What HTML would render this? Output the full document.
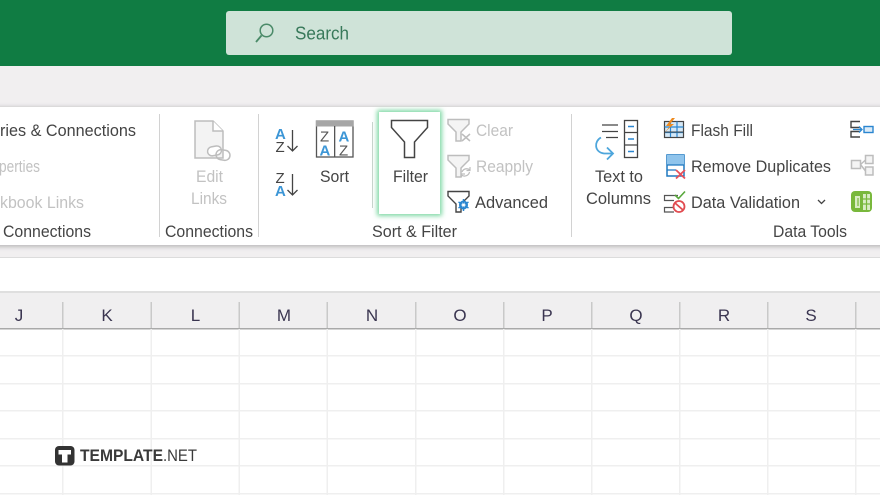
<!DOCTYPE html>
<html><head><meta charset="utf-8">
<style>
html,body{margin:0;padding:0;width:880px;height:495px;overflow:hidden;background:#fff}
svg{display:block;filter:blur(.35px)}
text{font-family:"Liberation Sans",sans-serif;font-size:17px;fill:#444}
.d{fill:#c2c2c2}
.h{font-size:17px;fill:#3a3550}
</style></head><body>
<svg width="880" height="495" viewBox="0 0 880 495" xmlns="http://www.w3.org/2000/svg">
<defs>
<filter id="glow" x="-30%" y="-30%" width="160%" height="160%"><feGaussianBlur stdDeviation="2.5"/></filter>
<filter id="sh" x="-5%" y="-20%" width="110%" height="150%"><feGaussianBlur stdDeviation="2"/></filter>
</defs>
<!-- bands -->
<rect width="880" height="66" fill="#107c43"/>
<rect y="66" width="880" height="191" fill="#f1eff0"/>
<rect x="226" y="11" width="506" height="44" rx="3" fill="#cfe3d8"/>
<circle cx="266.500" cy="30.500" r="6.300" fill="none" stroke="#4a8a68" stroke-width="1.500"/>
<path d="M261.500 35.500L256 42" stroke="#4a8a68" stroke-width="1.800" fill="none"/>
<text x="295" y="39.500" textLength="54" lengthAdjust="spacingAndGlyphs" style="fill:#38795a;font-size:18px">Search</text>
<!-- ribbon -->
<rect x="-10" y="107" width="900" height="140" fill="#8f8f8f" opacity=".55" filter="url(#sh)"/>
<rect y="107" width="880" height="138" fill="#fff"/>
<rect y="257" width="880" height="1" fill="#dcdcdc"/>
<rect y="258" width="880" height="33" fill="#fff"/>
<rect y="291" width="880" height="2" fill="#dfdfdf"/>
<rect y="293" width="880" height="35" fill="#f0eff0"/>
<rect y="328" width="880" height="1.500" fill="#a9a9a9"/>
<!-- ribbon separators -->
<rect x="159" y="114" width="1" height="123" fill="#d2d2d2"/>
<rect x="258" y="114" width="1" height="123" fill="#d2d2d2"/>
<rect x="372" y="122" width="1" height="86" fill="#c9d4cd"/>
<rect x="571" y="114" width="1" height="123" fill="#d2d2d2"/>
<!-- grid -->
<g fill="#efefef">
<rect y="355" width="880" height="1.500"/><rect y="383" width="880" height="1.500"/><rect y="410" width="880" height="1.500"/><rect y="438" width="880" height="1.500"/><rect y="465" width="880" height="1.500"/><rect y="493" width="880" height="1.500"/>
<rect x="62" y="329" width="1.500" height="166"/><rect x="150.500" y="329" width="1.500" height="166"/><rect x="238.500" y="329" width="1.500" height="166"/><rect x="326.500" y="329" width="1.500" height="166"/><rect x="415" y="329" width="1.500" height="166"/><rect x="503" y="329" width="1.500" height="166"/><rect x="591" y="329" width="1.500" height="166"/><rect x="679" y="329" width="1.500" height="166"/><rect x="767" y="329" width="1.500" height="166"/><rect x="855" y="329" width="1.500" height="166"/>
</g>
<g fill="#c9c9c9">
<rect x="62" y="302" width="1.500" height="26"/><rect x="150.500" y="302" width="1.500" height="26"/><rect x="238.500" y="302" width="1.500" height="26"/><rect x="326.500" y="302" width="1.500" height="26"/><rect x="415" y="302" width="1.500" height="26"/><rect x="503" y="302" width="1.500" height="26"/><rect x="591" y="302" width="1.500" height="26"/><rect x="679" y="302" width="1.500" height="26"/><rect x="767" y="302" width="1.500" height="26"/><rect x="855" y="302" width="1.500" height="26"/>
</g>
<!-- column letters -->
<g text-anchor="middle">
<text class="h" x="19" y="321">J</text><text class="h" x="107" y="321">K</text><text class="h" x="195.500" y="321">L</text><text class="h" x="284" y="321">M</text><text class="h" x="372" y="321">N</text><text class="h" x="460" y="321">O</text><text class="h" x="547" y="321">P</text><text class="h" x="636" y="321">Q</text><text class="h" x="724" y="321">R</text><text class="h" x="811" y="321">S</text>
</g>
<!-- filter highlight -->
<rect x="377" y="110" width="65" height="106" fill="#7fd8a4" filter="url(#glow)"/>
<rect x="379" y="112" width="61" height="102" fill="#fff"/>
<!-- ribbon text -->
<text x="0" y="136" textLength="136" lengthAdjust="spacingAndGlyphs">ries &amp; Connections</text>
<text class="d" x="-1" y="172" textLength="41" lengthAdjust="spacingAndGlyphs">perties</text>
<text class="d" x="0" y="208" textLength="84" lengthAdjust="spacingAndGlyphs">kbook Links</text>
<text x="3" y="237" textLength="88" lengthAdjust="spacingAndGlyphs">Connections</text>
<text class="d" x="196" y="182" textLength="27" lengthAdjust="spacingAndGlyphs">Edit</text>
<text class="d" x="191" y="204" textLength="36" lengthAdjust="spacingAndGlyphs">Links</text>
<text x="165" y="237" textLength="88" lengthAdjust="spacingAndGlyphs">Connections</text>
<text x="320" y="182" textLength="29" lengthAdjust="spacingAndGlyphs">Sort</text>
<text x="393" y="182" textLength="35" lengthAdjust="spacingAndGlyphs">Filter</text>
<text class="d" x="476" y="136" textLength="37" lengthAdjust="spacingAndGlyphs">Clear</text>
<text class="d" x="476" y="172" textLength="57" lengthAdjust="spacingAndGlyphs">Reapply</text>
<text x="475" y="208" textLength="73" lengthAdjust="spacingAndGlyphs">Advanced</text>
<text x="372" y="237" textLength="85" lengthAdjust="spacingAndGlyphs">Sort &amp; Filter</text>
<text x="595" y="182" textLength="48" lengthAdjust="spacingAndGlyphs">Text to</text>
<text x="586" y="204" textLength="65" lengthAdjust="spacingAndGlyphs">Columns</text>
<text x="691" y="136" textLength="62" lengthAdjust="spacingAndGlyphs">Flash Fill</text>
<text x="691" y="172" textLength="140" lengthAdjust="spacingAndGlyphs">Remove Duplicates</text>
<text x="691" y="208" textLength="109" lengthAdjust="spacingAndGlyphs">Data Validation</text>
<text x="773" y="237" textLength="74" lengthAdjust="spacingAndGlyphs">Data Tools</text>
<path d="M818 200l3.500 3.500 3.500-3.500" fill="none" stroke="#444" stroke-width="1.300"/>
<!-- edit links icon -->
<path d="M195 121H213L223 131V158H195Z" fill="#f3f3f3" stroke="#bdbdbd" stroke-width="1.500"/>
<path d="M213 121V131H223" fill="#fff" stroke="#bdbdbd" stroke-width="1.500"/>
<rect x="207.500" y="146.500" width="14" height="9" rx="4.500" fill="#fff" stroke="#bdbdbd" stroke-width="1.500" transform="rotate(-10 214 151)"/>
<rect x="216" y="150" width="14" height="10" rx="5" fill="none" stroke="#bdbdbd" stroke-width="1.500" transform="rotate(10 223 155)"/>
<!-- AZ / ZA -->
<text x="275" y="139" style="font-size:15px;font-weight:bold;fill:#3c96d6">A</text>
<text x="275.500" y="152" style="font-size:15px;fill:#444">Z</text>
<text x="275.500" y="183" style="font-size:15px;fill:#444">Z</text>
<text x="275" y="196" style="font-size:15px;font-weight:bold;fill:#3c96d6">A</text>
<path d="M292.500 130V151M287.500 146l5 5 5-5M292.500 174V195M287.500 190l5 5 5-5" fill="none" stroke="#444" stroke-width="1.300"/>
<!-- Sort icon -->
<rect x="316.500" y="121" width="36.500" height="36" fill="#fff" stroke="#555" stroke-width="1.300"/>
<rect x="316" y="120.500" width="37.500" height="6" fill="#a6a6a6"/>
<rect x="334" y="126" width="1.300" height="31" fill="#555"/>
<text x="320" y="141.500" style="font-size:15px;fill:#555">Z</text>
<text x="319.500" y="155.500" style="font-size:15px;font-weight:bold;fill:#3c96d6">A</text>
<text x="338.500" y="141.500" style="font-size:15px;font-weight:bold;fill:#3c96d6">A</text>
<text x="339" y="155.500" style="font-size:15px;fill:#555">Z</text>
<!-- big funnel -->
<path d="M391.500 120.500H427.500V127.500L414.500 142V157.500H404.500V142L391.500 127.500Z" fill="#fff" stroke="#444" stroke-width="1.500" stroke-linejoin="miter"/>
<!-- small funnels -->
<path d="M448 119.500H469V124L461 132V141H456V132L448 124Z" fill="#f4f4f4" stroke="#bdbdbd" stroke-width="1.500"/>
<path d="M462 134l8 7M470 134l-8 7" stroke="#bdbdbd" stroke-width="1.500"/>
<path d="M448 155.500H469V160L461 168V177H456V168L448 160Z" fill="#f4f4f4" stroke="#bdbdbd" stroke-width="1.500"/>
<path d="M462 172a5 5 0 0 1 8-2M469.500 172a5 5 0 0 1-8 3M470 167v3.500h-3.500M461.500 177v-3h3.500" fill="none" stroke="#bdbdbd" stroke-width="1.200"/>
<path d="M448 191.500H469V196L461 204V212H456V204L448 196Z" fill="#fff" stroke="#444" stroke-width="1.400"/>
<circle cx="463.500" cy="205" r="3.500" fill="#fff" stroke="#2a86d0" stroke-width="2"/>
<path d="M463.500 199v12M458.500 202l10 6M468.500 202l-10 6" stroke="#2a86d0" stroke-width="1.500"/>
<circle cx="463.500" cy="205" r="1.500" fill="#fff"/>
<!-- text to columns -->
<path d="M602 125H618M602 131.500H618M606 137.500H618" stroke="#444" stroke-width="1.300" fill="none"/>
<rect x="624.500" y="120.500" width="13" height="37" fill="#fff" stroke="#444" stroke-width="1.300"/>
<path d="M624.500 132.500H637.500M624.500 145H637.500" stroke="#444" stroke-width="1.300"/>
<path d="M628 126.500H634M628 139H634M628 151.500H634" stroke="#2a86d0" stroke-width="1.500"/>
<path d="M601 137.500C594 141 594 152 604 153.500H613M607 147.500l6 6-6 6" fill="none" stroke="#4ea6dc" stroke-width="1.800"/>
<!-- flash fill -->
<rect x="664.500" y="121.500" width="19" height="16" fill="#d5e8f6" stroke="#444" stroke-width="1.200"/>
<path d="M664.500 132.500H683.500M664.500 127H683.500M670.500 121.500V137.500M677 121.500V137.500" stroke="#2a86d0" stroke-width="1.200" fill="none"/>
<rect x="664.500" y="132" width="19" height="5.500" fill="none" stroke="#444" stroke-width="1"/>
<path d="M672 118L666 126H670L665 132L674 124H670L675 118Z" fill="#ee8a1e"/>
<!-- remove dupes -->
<rect x="667" y="155" width="17" height="21" fill="#fff" stroke="#1f78c0" stroke-width="1.500"/>
<rect x="667" y="155" width="17" height="10" fill="#8fc4ec"/>
<path d="M667 165H684M667 170H676" stroke="#1f78c0" stroke-width="1.300"/>
<path d="M676 170l9 8.500M685 170l-9 8.500" stroke="#e8505a" stroke-width="1.800"/>
<!-- data validation -->
<path d="M678 195.500H664.500V200.500H674M674 207.500H664.500V212H674" fill="none" stroke="#555" stroke-width="1.200"/>
<path d="M675 195l3.500 3.500 6.500-7" fill="none" stroke="#58a83c" stroke-width="1.600"/>
<circle cx="679" cy="206.500" r="5.500" fill="#fff" stroke="#e14b50" stroke-width="1.800"/>
<path d="M675 203l8 7" stroke="#e14b50" stroke-width="1.800"/>
<!-- right column icons -->
<path d="M860 121.500H851V127.500H860M860 131.500H851V137H860" fill="none" stroke="#444" stroke-width="1.400"/>
<rect x="864" y="126.500" width="9" height="6" fill="#dcebf7" stroke="#2a86d0" stroke-width="1.400"/>
<path d="M853 129.500H862M859 126.500l3 3-3 3" fill="none" stroke="#2a86d0" stroke-width="1.300"/>
<g fill="#f4f4f4" stroke="#bdbdbd" stroke-width="1.500">
<rect x="851.500" y="160.500" width="9" height="8"/><rect x="865.500" y="155.500" width="7.500" height="8"/><rect x="865.500" y="167" width="7.500" height="8"/>
</g>
<path d="M860.500 164.500L865.500 160M860.500 164.500L865.500 171" stroke="#bdbdbd" stroke-width="1.500" fill="none"/>
<rect x="851" y="191" width="21" height="21" rx="4" fill="#79b83c"/>
<path d="M855 196H860V208H855ZM863 194H870V210H863Z" fill="#d9ecc4"/>
<path d="M866.500 194V210M863 199H870M863 204H870M858 198V206" stroke="#79b83c" stroke-width="1.200" fill="none"/>
<!-- Template logo -->
<rect x="55" y="446" width="19.500" height="19.500" rx="4" fill="#333"/>
<path d="M58.500 450H71V454.500H67.500V462.500H62V454.500H58.500Z" fill="#fff"/>
<text x="80" y="461" textLength="83" lengthAdjust="spacingAndGlyphs" style="font-size:17px;font-weight:bold;fill:#3a3a3a">TEMPLATE</text>
<text x="163" y="461" textLength="34" lengthAdjust="spacingAndGlyphs" style="font-size:17px;fill:#3a3a3a">.NET</text>
</svg>
</body></html>
